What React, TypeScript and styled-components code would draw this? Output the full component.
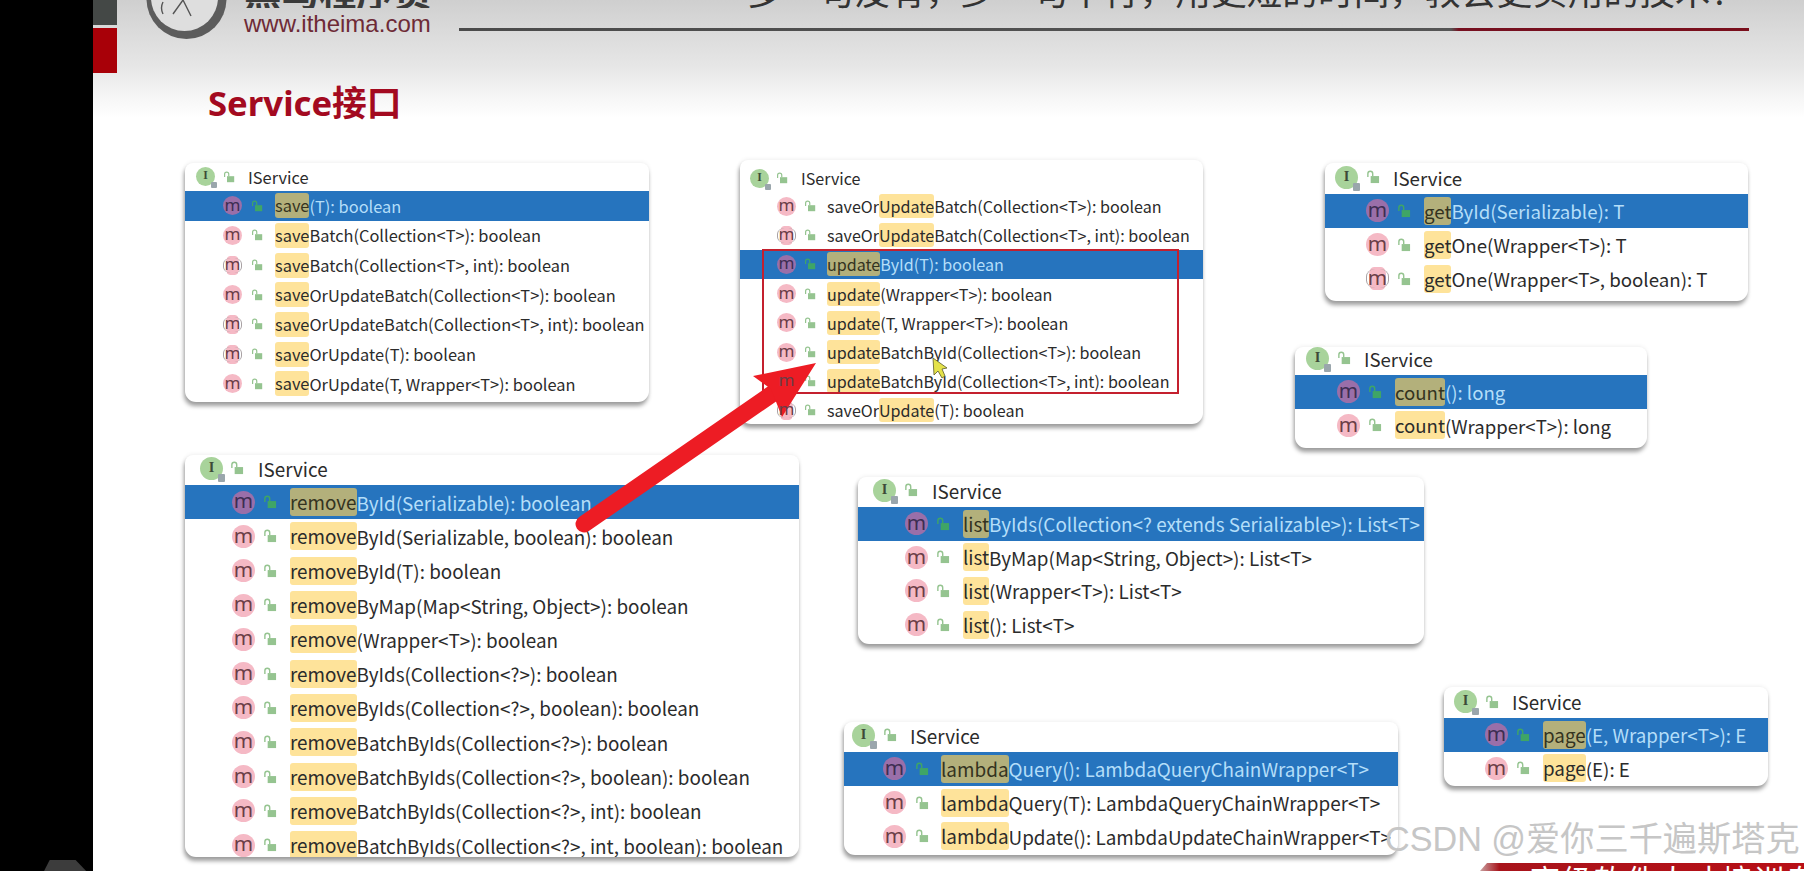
import React from "react";
import styled, { createGlobalStyle } from "styled-components";

const Global = createGlobalStyle`
  html, body { margin: 0; padding: 0; background: #000; overflow: hidden; }
`;

const sansStack = `"Noto Sans CJK SC", "Noto Sans", sans-serif`;

const Page = styled.div`
  position: relative;
  display: flex;
  width: 1804px;
  height: 871px;
  overflow: hidden;
  background: #000;
  font-family: ${sansStack};
`;

const Rail = styled.div`
  position: relative;
  flex: 0 0 93px;
  background: #000;
`;

const RailKnob = styled.div`
  position: absolute;
  left: 42px;
  bottom: -4px;
  width: 48px;
  height: 15px;
  background: #3c3c3c;
  clip-path: polygon(16% 0, 70% 0, 100% 100%, 0 100%);
`;

const Slide = styled.div`
  flex: 1;
  position: relative;
  display: flex;
  flex-direction: column;
  background: linear-gradient(#cfcfcf 0, #dadada 30px, #e6e6e6 65px, #f7f7f7 100px, #fff 118px);
`;

const TopBar = styled.header`
  display: flex;
  align-items: flex-start;
  height: 73px;
`;

const Tabs = styled.div`
  flex: 0 0 24px;
  display: flex;
  flex-direction: column;
  gap: 3px;
`;

const DarkTab = styled.div`
  height: 25px;
  background: #444846;
`;

const RedTab = styled.div`
  height: 45px;
  background: #a80008;
`;

const Logo = styled.svg`
  flex: 0 0 81px;
  margin-left: 29px;
  height: 40px;
`;

const Brand = styled.div`
  margin-left: 17px;
  width: 190px;
  display: flex;
  flex-direction: column;
`;

const BrandCut = styled.div`
  height: 8px;
  overflow: hidden;
  display: flex;
  align-items: flex-end;
`;

const BrandName = styled.span`
  font-size: 37.5px;
  line-height: 38px;
  font-weight: 700;
  color: #3a3a3a;
  white-space: nowrap;
  margin-bottom: -1px;
`;

const BrandUrl = styled.div`
  margin-top: 3px;
  font-family: "Liberation Sans", sans-serif;
  font-size: 24px;
  line-height: 26px;
  color: #6e2a36;
  white-space: nowrap;
`;

const SloganBlock = styled.div`
  margin-left: 25px;
  width: 1290px;
  display: flex;
  flex-direction: column;
`;

const SloganCut = styled.div`
  height: 28px;
  overflow: hidden;
  position: relative;
`;

const Slogan = styled.div`
  position: absolute;
  left: 288px;
  top: -35px;
  font-family: "Noto Sans CJK SC", sans-serif;
  font-size: 35.7px;
  line-height: 50px;
  color: #333;
  white-space: nowrap;
`;

const Rule = styled.div`
  height: 3px;
  background: linear-gradient(90deg, #4b4b4b 0, #555 76.9%, #761020 77.5%, #7a0f1c 100%);
`;

const Title = styled.h1`
  margin: 6px 0 0 115px;
  font-family: "Noto Sans", "Noto Sans CJK SC", sans-serif;
  font-size: 34.7px;
  line-height: 48px;
  font-weight: 700;
  color: #a30a20;
`;

const Canvas = styled.div`
  position: absolute;
  inset: 0;
`;

const Panel = styled.section<{ $x: number; $y: number; $w: number; $h: number }>`
  position: absolute;
  left: ${(p) => p.$x}px;
  top: ${(p) => p.$y}px;
  width: ${(p) => p.$w}px;
  height: ${(p) => p.$h}px;
  background: #fff;
  border-radius: 8px 8px 11px 11px;
  box-shadow: -1px 4px 4px rgba(0, 0, 0, 0.38), 0 -1px 4px rgba(0, 0, 0, 0.06);
  overflow: hidden;
  color: #2b2b2b;
`;

const Head = styled.div<{ $h: number; $pad: number; $gap: number; $textGap: number; $font: number; $lift: number }>`
  box-sizing: border-box;
  display: flex;
  align-items: center;
  height: ${(p) => p.$h}px;
  padding: ${(p) => Math.max(-p.$lift, 0)}px 0 ${(p) => Math.max(p.$lift, 0)}px ${(p) => p.$pad}px;
  font-size: ${(p) => p.$font}px;
  gap: ${(p) => p.$gap}px;
  & > span:last-child {
    margin-left: ${(p) => p.$textGap}px;
  }
`;

const Row = styled.div<{ $h: number; $pad: number; $font: number; $sel: boolean }>`
  display: flex;
  align-items: center;
  height: ${(p) => p.$h}px;
  padding-left: ${(p) => p.$pad}px;
  font-size: ${(p) => p.$font}px;
  white-space: nowrap;
  background: ${(p) => (p.$sel ? "#2674be" : "transparent")};
  color: ${(p) => (p.$sel ? "#b4def9" : "#2b2b2b")};
`;

const InterfaceIcon = styled.i<{ $d: number }>`
  position: relative;
  flex: none;
  width: ${(p) => p.$d}px;
  height: ${(p) => p.$d}px;
  border-radius: 50%;
  background: #a8d39b;
  color: #3c4a38;
  font: normal 700 ${(p) => p.$d * 0.62}px/${(p) => p.$d - 2}px "Liberation Serif", serif;
  text-align: center;
  &::after {
    content: "";
    position: absolute;
    right: -2px;
    bottom: -2px;
    width: ${(p) => p.$d * 0.32}px;
    height: ${(p) => p.$d * 0.32}px;
    border-radius: 1px;
    background: #9aa6ac;
  }
`;

const MethodIcon = styled.i<{ $d: number; $sel: boolean; $paren: boolean }>`
  position: relative;
  flex: none;
  display: flex;
  align-items: center;
  justify-content: center;
  width: ${(p) => p.$d}px;
  height: ${(p) => p.$d}px;
  color: ${(p) => (p.$sel ? "#3d2d52" : "#6a3d47")};
  font: normal 400 ${(p) => p.$d * 0.9}px/1 "Noto Sans", sans-serif;
  &::before {
    content: "";
    position: absolute;
    top: 0;
    bottom: 0;
    left: ${(p) => (p.$paren ? "14%" : "0")};
    right: ${(p) => (p.$paren ? "14%" : "0")};
    border-radius: ${(p) => (p.$paren ? "30%" : "50%")};
    background: ${(p) => (p.$sel ? "#9a6fa9" : "#f5b9c5")};
  }
  &::after {
    content: "";
    display: ${(p) => (p.$paren ? "block" : "none")};
    position: absolute;
    inset: 2px 0;
    border-radius: 40%;
    border-left: 1.5px solid #a9a2a4;
    border-right: 1.5px solid #a9a2a4;
  }
`;

const MethodLetter = styled.span`
  position: relative;
  z-index: 1;
  margin-top: -3px;
`;

const LockBox = styled.svg<{ $d: number; $ml: number }>`
  flex: none;
  width: ${(p) => p.$d}px;
  height: ${(p) => p.$d}px;
  margin-left: ${(p) => p.$ml}px;
`;

const HeadLock = styled.svg<{ $d: number }>`
  flex: none;
  width: ${(p) => p.$d}px;
  height: ${(p) => p.$d}px;
`;

const Label = styled.span<{ $ml: number }>`
  display: inline-flex;
  align-items: center;
  margin-left: ${(p) => p.$ml}px;
`;

const Hit = styled.span<{ $sel: boolean; $h: number }>`
  display: inline-block;
  height: ${(p) => p.$h}px;
  line-height: ${(p) => p.$h}px;
  border-radius: 3px;
  background: ${(p) => (p.$sel ? "#b3b07b" : "#fee39a")};
  color: ${(p) => (p.$sel ? "#33331f" : "#2b2b2b")};
`;

const Mark = styled.svg`
  position: absolute;
  inset: 0;
  width: 1804px;
  height: 871px;
  pointer-events: none;
`;

const RedBox = styled.div`
  position: absolute;
  left: 762px;
  top: 249px;
  width: 413px;
  height: 141px;
  border: 2px solid #c4202e;
`;

const Watermark = styled.div`
  position: absolute;
  left: 1385px;
  top: 817px;
  font-family: "Liberation Sans", "Noto Sans CJK SC", sans-serif;
  font-size: 34.2px;
  line-height: 44px;
  color: #c6c6c6;
  white-space: nowrap;
`;

const Ribbon = styled.div`
  position: absolute;
  right: 0;
  bottom: 0;
  width: 324px;
  height: 8px;
  overflow: hidden;
  background: linear-gradient(90deg, #c9a0a0 0, #a8141b 6%, #b80f16 100%);
  clip-path: polygon(7px 0, 100% 0, 100% 100%, 0 100%);
`;

const RibbonText = styled.div`
  margin: -5px 0 0 50px;
  font-family: "Noto Sans CJK SC", sans-serif;
  font-size: 30px;
  line-height: 40px;
  letter-spacing: 2px;
  color: #fff;
  white-space: nowrap;
`;

const LockGlyph = ({ color }: { color: string }) => (
  <>
    <rect x="5" y="6.5" width="9" height="7.5" fill={color} />
    <path d="M2 7.5 V4 a2.6 2.6 0 0 1 5.2 0 V6.5" fill="none" stroke={color} strokeWidth="1.5" />
  </>
);

type PanelDef = {
  x: number; y: number; w: number; h: number;
  headH: number; lift: number; rowH: number; font: number; headFont: number;
  d: number; lock: number; hitH: number;
  pad: number; lockGap: number; textGap: number;
  headPad: number; headGap: number; headTextGap: number;
  sel: number; parens?: number[]; rows: string[];
};

const panels: PanelDef[] = [
  {
    x: 185, y: 163, w: 464, h: 239, headH: 28, lift: 1, rowH: 29.65, font: 16.4, headFont: 16.4,
    d: 19, lock: 12, hitH: 25, pad: 38, lockGap: 9, textGap: 12, headPad: 11, headGap: 8, headTextGap: 5,
    sel: 0, parens: [2, 4, 5],
    rows: [
      "[save](T): boolean",
      "[save]Batch(Collection<T>): boolean",
      "[save]Batch(Collection<T>, int): boolean",
      "[save]OrUpdateBatch(Collection<T>): boolean",
      "[save]OrUpdateBatch(Collection<T>, int): boolean",
      "[save]OrUpdate(T): boolean",
      "[save]OrUpdate(T, Wrapper<T>): boolean",
    ],
  },
  {
    x: 740, y: 160, w: 463, h: 264, headH: 31.5, lift: -5, rowH: 29.2, font: 16.1, headFont: 16.1,
    d: 19, lock: 12, hitH: 24, pad: 37, lockGap: 8, textGap: 11, headPad: 10, headGap: 7, headTextGap: 6,
    sel: 2, parens: [1, 7],
    rows: [
      "saveOr[Update]Batch(Collection<T>): boolean",
      "saveOr[Update]Batch(Collection<T>, int): boolean",
      "[update]ById(T): boolean",
      "[update](Wrapper<T>): boolean",
      "[update](T, Wrapper<T>): boolean",
      "[update]BatchById(Collection<T>): boolean",
      "[update]BatchById(Collection<T>, int): boolean",
      "saveOr[Update](T): boolean",
    ],
  },
  {
    x: 1325, y: 163, w: 423, h: 138, headH: 30.5, lift: 2, rowH: 34, font: 18.7, headFont: 18.7,
    d: 23, lock: 14, hitH: 28, pad: 41, lockGap: 8, textGap: 13, headPad: 10, headGap: 8, headTextGap: 5,
    sel: 0, parens: [2],
    rows: ["[get]ById(Serializable): T", "[get]One(Wrapper<T>): T", "[get]One(Wrapper<T>, boolean): T"],
  },
  {
    x: 1295, y: 347, w: 352, h: 101, headH: 28, lift: 6, rowH: 33.6, font: 18.6, headFont: 18.6,
    d: 23, lock: 14, hitH: 28, pad: 42, lockGap: 8, textGap: 13, headPad: 11, headGap: 8, headTextGap: 5,
    sel: 0,
    rows: ["[count](): long", "[count](Wrapper<T>): long"],
  },
  {
    x: 185, y: 455, w: 614, h: 402, headH: 30, lift: 4, rowH: 34.3, font: 18.85, headFont: 18.85,
    d: 23, lock: 14, hitH: 28, pad: 47, lockGap: 8, textGap: 13, headPad: 15, headGap: 7, headTextGap: 7,
    sel: 0,
    rows: [
      "[remove]ById(Serializable): boolean",
      "[remove]ById(Serializable, boolean): boolean",
      "[remove]ById(T): boolean",
      "[remove]ByMap(Map<String, Object>): boolean",
      "[remove](Wrapper<T>): boolean",
      "[remove]ByIds(Collection<?>): boolean",
      "[remove]ByIds(Collection<?>, boolean): boolean",
      "[remove]BatchByIds(Collection<?>): boolean",
      "[remove]BatchByIds(Collection<?>, boolean): boolean",
      "[remove]BatchByIds(Collection<?>, int): boolean",
      "[remove]BatchByIds(Collection<?>, int, boolean): boolean",
    ],
  },
  {
    x: 858, y: 477, w: 566, h: 167, headH: 30, lift: 4, rowH: 33.6, font: 18.85, headFont: 18.85,
    d: 23, lock: 14, hitH: 28, pad: 47, lockGap: 8, textGap: 13, headPad: 15, headGap: 8, headTextGap: 6,
    sel: 0,
    rows: [
      "[list]ByIds(Collection<? extends Serializable>): List<T>",
      "[list]ByMap(Map<String, Object>): List<T>",
      "[list](Wrapper<T>): List<T>",
      "[list](): List<T>",
    ],
  },
  {
    x: 844, y: 722, w: 554, h: 133, headH: 30, lift: 4, rowH: 33.8, font: 18.9, headFont: 18.9,
    d: 23, lock: 14, hitH: 28, pad: 39, lockGap: 9, textGap: 12, headPad: 8, headGap: 8, headTextGap: 5,
    sel: 0,
    rows: [
      "[lambda]Query(): LambdaQueryChainWrapper<T>",
      "[lambda]Query(T): LambdaQueryChainWrapper<T>",
      "[lambda]Update(): LambdaUpdateChainWrapper<T>",
    ],
  },
  {
    x: 1444, y: 687, w: 324, h: 99, headH: 31, lift: 2, rowH: 33.6, font: 18.8, headFont: 18.8,
    d: 23, lock: 14, hitH: 28, pad: 41, lockGap: 8, textGap: 13, headPad: 10, headGap: 8, headTextGap: 5,
    sel: 0,
    rows: ["[page](E, Wrapper<T>): E", "[page](E): E"],
  },
];

const splitRow = (s: string) => {
  const m = s.match(/^(.*?)\[(.*?)\](.*)$/);
  return m ? { pre: m[1], hit: m[2], post: m[3] } : { pre: s, hit: "", post: "" };
};

const ServicePanel = ({ p }: { p: PanelDef }) => (
  <Panel $x={p.x} $y={p.y} $w={p.w} $h={p.h}>
    <Head $h={p.headH} $lift={p.lift} $pad={p.headPad} $gap={p.headGap} $textGap={p.headTextGap} $font={p.headFont}>
      <InterfaceIcon $d={p.d}>I</InterfaceIcon>
      <HeadLock $d={p.lock} viewBox="0 0 15 15">
        <LockGlyph color="#95c490" />
      </HeadLock>
      <span>IService</span>
    </Head>
    {p.rows.map((r, i) => {
      const sel = i === p.sel;
      const { pre, hit, post } = splitRow(r);
      return (
        <Row key={r} $h={p.rowH} $pad={p.pad} $font={p.font} $sel={sel}>
          <MethodIcon $d={p.d} $sel={sel} $paren={!!p.parens?.includes(i)}>
            <MethodLetter>m</MethodLetter>
          </MethodIcon>
          <LockBox $d={p.lock} $ml={p.lockGap} viewBox="0 0 15 15">
            <LockGlyph color={sel ? "#3fa566" : "#95c490"} />
          </LockBox>
          <Label $ml={p.textGap}>
            {pre}
            <Hit $sel={sel} $h={p.hitH}>{hit}</Hit>
            {post}
          </Label>
        </Row>
      );
    })}
  </Panel>
);

export default function App() {
  return (
    <Page>
      <Global />
      <Rail>
        <RailKnob />
      </Rail>
      <Slide>
        <TopBar>
          <Tabs>
            <DarkTab />
            <RedTab />
          </Tabs>
          <Logo viewBox="0 0 81 40">
            <circle cx="40.5" cy="-1" r="40" fill="#5c5c5c" />
            <circle cx="38.5" cy="-2.5" r="33.5" fill="#dedede" />
            <path d="M17 2 Q14 8 17 14 M27 14 L37 0 L45 16" fill="none" stroke="#555" strokeWidth="1.4" />
          </Logo>
          <Brand>
            <BrandCut>
              <BrandName>黑马程序员</BrandName>
            </BrandCut>
            <BrandUrl>www.itheima.com</BrandUrl>
          </Brand>
          <SloganBlock>
            <SloganCut>
              <Slogan>多一句没有，少一句不行，用更短的时间，教会更实用的技术！</Slogan>
            </SloganCut>
            <Rule />
          </SloganBlock>
        </TopBar>
        <Title>Service接口</Title>
      </Slide>
      <Canvas>
        {panels.map((p) => (
          <ServicePanel key={`${p.x}-${p.y}`} p={p} />
        ))}
        <RedBox />
        <Mark viewBox="0 0 1804 871">
          <line x1="584" y1="524" x2="785" y2="385" stroke="#ed1c24" strokeWidth="17" strokeLinecap="round" />
          <polygon points="816,363 753,376 771,389 782,417" fill="#ed1c24" />
          <polygon points="933,358 934,375 938,371 942,378 945,376 942,369 947,368" fill="#e4e24a" stroke="#5b5b2c" strokeWidth="0.8" />
        </Mark>
        <Watermark>CSDN @爱你三千遍斯塔克</Watermark>
        <Ribbon>
          <RibbonText>高级软件人才培训专家</RibbonText>
        </Ribbon>
      </Canvas>
    </Page>
  );
}
